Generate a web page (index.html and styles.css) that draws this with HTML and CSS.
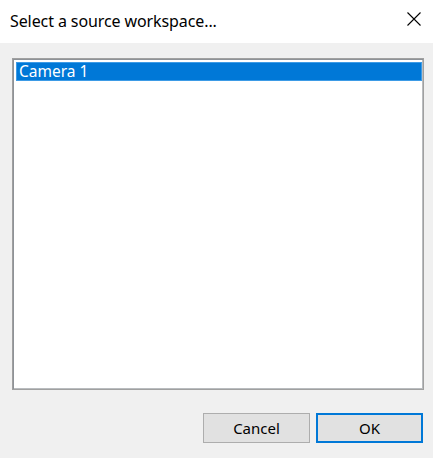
FILE: index.html
```html
<!DOCTYPE html>
<html>
<head>
<meta charset="utf-8">
<link rel="stylesheet" href="styles.css">
</head>
<body>
<div class="dialog">
  <div class="titlebar">
    <span class="title">Select a source workspace...</span>
    <span class="close" aria-label="Close">
      <svg width="14" height="14" viewBox="0 0 14 14"><path d="M0.5 0.5 L13.5 13.5 M13.5 0.5 L0.5 13.5" stroke="#000" stroke-width="1.1" fill="none"/></svg>
    </span>
  </div>
  <div class="content">
    <div class="listbox">
      <div class="item selected">Camera 1</div>
    </div>
    <div class="buttons">
      <button class="btn">Cancel</button>
      <button class="btn default">OK</button>
    </div>
  </div>
</div>
</body>
</html>
```
FILE: styles.css
```css
html, body {
  margin: 0;
  padding: 0;
}
body {
  width: 433px;
  height: 458px;
  background: #f0f0f0;
  font-family: "Noto Sans", "Open Sans", "DejaVu Sans", sans-serif;
  overflow: hidden;
}
.dialog {
  display: flex;
  flex-direction: column;
  height: 458px;
}
.titlebar {
  height: 43px;
  background: #ffffff;
  display: flex;
  align-items: center;
  justify-content: space-between;
  padding: 0 12px 0 10px;
  box-sizing: border-box;
}
.title {
  font-size: 16px;
  color: #000;
  letter-spacing: -0.1px;
  margin-top: -1px;
}
.close {
  display: flex;
  width: 14px;
  height: 14px;
  margin-top: -5px;
}
.content {
  flex: 1;
  display: flex;
  flex-direction: column;
  padding: 15px 9px 0 12px;
}
.listbox {
  height: 332px;
  box-sizing: border-box;
  background: #ffffff;
  border: 1px solid #a0a0a0;
  box-shadow: inset 1px 1px 0 #8e9297, inset -1px -1px 0 #b9bcbf;
  padding: 3px 1px 0 3px;
}
.item {
  height: 19px;
  line-height: 18px;
  font-size: 15.5px;
  padding-left: 3px;
  box-sizing: border-box;
}
.selected {
  background: #0078d7;
  color: #ffffff;
  box-shadow: inset 0 0 0 1px #3d9be6;
}
.buttons {
  display: flex;
  justify-content: flex-end;
  gap: 6px;
  margin-top: 23px;
  padding-right: 1px;
}
.btn {
  width: 107px;
  height: 30px;
  box-sizing: border-box;
  background: #e1e1e1;
  border: 1px solid #adadad;
  font-family: "Noto Sans", "Open Sans", "DejaVu Sans", sans-serif;
  font-size: 15px;
  color: #000;
  padding: 0;
  margin: 0;
}
.btn.default {
  border: 2px solid #0078d7;
}
```
